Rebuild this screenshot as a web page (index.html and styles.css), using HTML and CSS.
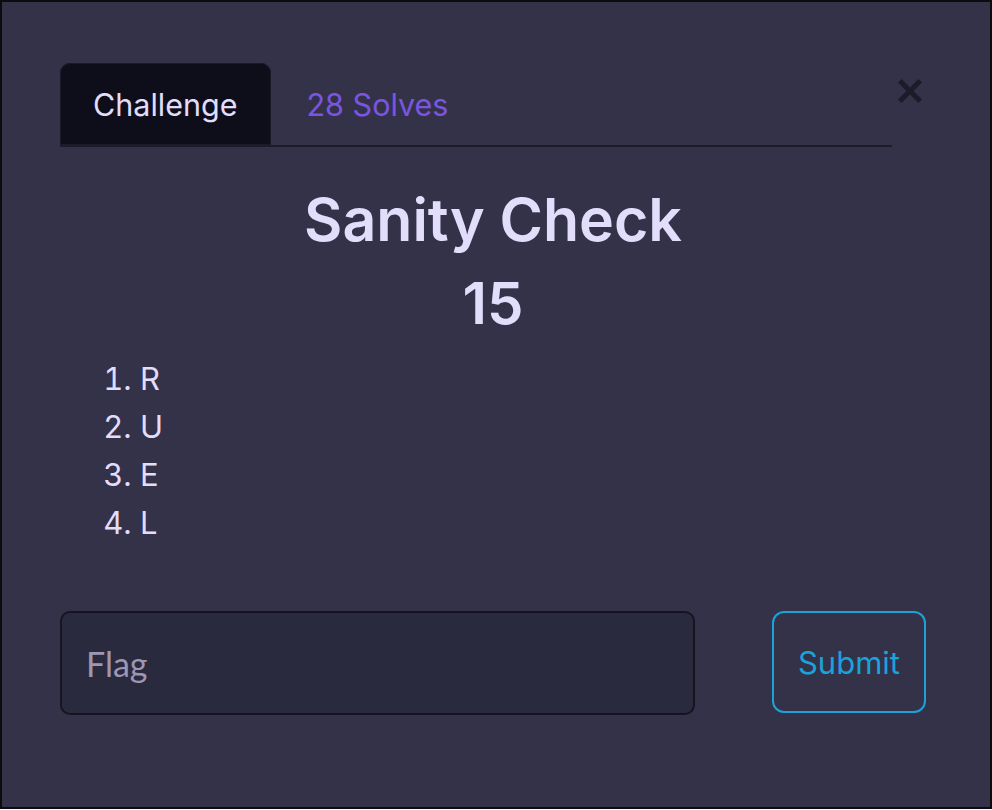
FILE: index.html
```html
<!DOCTYPE html>
<html>
<head>
<meta charset="utf-8">
<link rel="stylesheet" href="styles.css">
</head>
<body>
<div class="modal">
  <div class="header">
    <nav class="tabs">
      <div class="tab active">Challenge</div>
      <div class="tab solves">28 Solves</div>
    </nav>
    <button class="close" aria-label="Close">
      <svg width="26" height="26" viewBox="0 0 26 26"><path d="M4.5 4.5 L21.5 21.5 M21.5 4.5 L4.5 21.5" stroke="#1c1b2a" stroke-width="5" stroke-linecap="square"/></svg>
    </button>
  </div>
  <h1 class="title">Sanity Check</h1>
  <h2 class="value">15</h2>
  <ol class="desc">
    <li>R</li>
    <li>U</li>
    <li>E</li>
    <li>L</li>
  </ol>
  <form class="flag-row">
    <input class="flag-input" type="text" placeholder="Flag">
    <button class="submit" type="button">Submit</button>
  </form>
</div>
</body>
</html>
```
FILE: styles.css
```css
html, body {
  margin: 0;
  padding: 0;
  background: #ffffff;
}
.modal {
  box-sizing: border-box;
  width: 992px;
  height: 809px;
  background: #333249;
  border: 2px solid #0b0b10;
  padding: 61px 64px 0 58px;
  font-family: Inter, "Noto Sans", sans-serif;
  color: #e2ddfb;
}
.header {
  display: flex;
  align-items: flex-start;
}
.tabs {
  flex: 1;
  display: flex;
  border-bottom: 2px solid #1c1b2a;
}
.tab {
  font-size: 30.5px;
  height: 82px;
  line-height: 84px;
  padding: 0 33px;
  border-radius: 10px 10px 0 0;
}
.tab.active {
  background: #0e0e1a;
  color: #e2ddfb;
  box-shadow: inset 0 0 0 1px #1a1a28;
}
.tab.solves {
  color: #7a55e0;
  padding: 0 36px;
}
.close {
  background: none;
  border: none;
  padding: 0;
  margin: 15px 3px 0 5px;
  width: 26px;
  height: 26px;
  display: flex;
}
.title {
  margin: 37px 0 0;
  text-align: center;
  font-size: 59px;
  font-weight: 600;
  line-height: 72px;
}
.value {
  margin: 17px 0 0;
  text-align: center;
  font-size: 58px;
  font-weight: 600;
  line-height: 60px;
}
.desc {
  margin: 22px 0 0;
  padding-left: 80px;
  font-size: 31px;
  line-height: 48px;
}
.flag-row {
  margin: 64px 0 0;
  display: flex;
  justify-content: space-between;
  align-items: flex-start;
}
.flag-input {
  box-sizing: border-box;
  width: 635px;
  height: 104px;
  background: #2a2a3f;
  border: 2px solid #15141f;
  border-radius: 10px;
  padding: 0 24px;
  font-family: Lato, "Noto Sans", sans-serif;
  font-size: 34px;
  color: #e2ddfb;
  outline: none;
}
.flag-input::placeholder {
  color: #9d97b4;
}
.submit {
  box-sizing: border-box;
  width: 154px;
  height: 102px;
  background: transparent;
  border: 2px solid #1aa3db;
  border-radius: 12px;
  color: #1aa3db;
  font-family: Inter, "Noto Sans", sans-serif;
  font-size: 31px;
  padding: 0;
}
```
